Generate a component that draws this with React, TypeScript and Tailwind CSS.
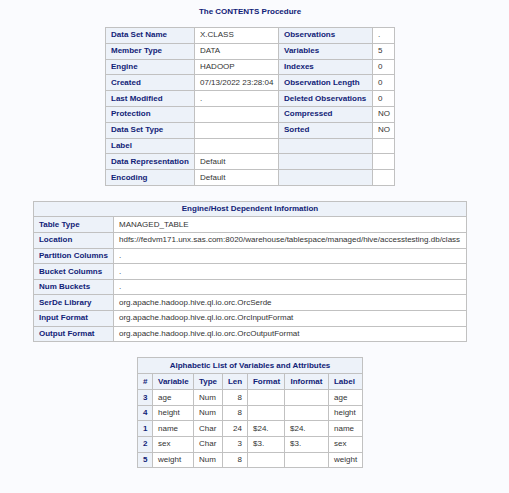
import React from 'react'

const cell = 'border border-[#c1c1c1] px-[5px] whitespace-nowrap'
const th = cell + ' bg-[#edf2f9] text-[#112277] font-bold'
const td = cell + ' bg-white text-[#333]'

const attrs: [string, string, string, string][] = [
  ['Data Set Name', 'X.CLASS', 'Observations', '.'],
  ['Member Type', 'DATA', 'Variables', '5'],
  ['Engine', 'HADOOP', 'Indexes', '0'],
  ['Created', '07/13/2022 23:28:04', 'Observation Length', '0'],
  ['Last Modified', '.', 'Deleted Observations', '0'],
  ['Protection', '', 'Compressed', 'NO'],
  ['Data Set Type', '', 'Sorted', 'NO'],
  ['Label', '', '', ''],
  ['Data Representation', 'Default', '', ''],
  ['Encoding', 'Default', '', ''],
]

const engine: [string, string][] = [
  ['Table Type', 'MANAGED_TABLE'],
  ['Location', 'hdfs://fedvm171.unx.sas.com:8020/warehouse/tablespace/managed/hive/accesstesting.db/class'],
  ['Partition Columns', '.'],
  ['Bucket Columns', '.'],
  ['Num Buckets', '.'],
  ['SerDe Library', 'org.apache.hadoop.hive.ql.io.orc.OrcSerde'],
  ['Input Format', 'org.apache.hadoop.hive.ql.io.orc.OrcInputFormat'],
  ['Output Format', 'org.apache.hadoop.hive.ql.io.orc.OrcOutputFormat'],
]

const vars = [
  { n: '3', name: 'age', type: 'Num', len: '8', fmt: '', inf: '', label: 'age' },
  { n: '4', name: 'height', type: 'Num', len: '8', fmt: '', inf: '', label: 'height' },
  { n: '1', name: 'name', type: 'Char', len: '24', fmt: '$24.', inf: '$24.', label: 'name' },
  { n: '2', name: 'sex', type: 'Char', len: '3', fmt: '$3.', inf: '$3.', label: 'sex' },
  { n: '5', name: 'weight', type: 'Num', len: '8', fmt: '', inf: '', label: 'weight' },
]

export default function App() {
  return (
    <div
      className="w-[509px] h-[493px] pr-[9px] bg-[#fafbfe] flex flex-col items-center text-[8px] leading-none"
      style={{ fontFamily: '"Liberation Sans", Arial, sans-serif' }}
    >
      <h1 className="mt-[8px] h-[19px] text-[8px] font-bold text-[#112277]">The CONTENTS Procedure</h1>

      {/* Attributes */}
      <table className="table-fixed border-collapse border border-[#c1c1c1] w-[289px]">
        <colgroup>
          <col className="w-[89px]" />
          <col className="w-[84px]" />
          <col className="w-[94px]" />
          <col className="w-[22px]" />
        </colgroup>
        <tbody>
          {attrs.map((r) => (
            <tr key={r[0]} className="h-[15.8px]">
              <th className={th + ' text-left'}>{r[0]}</th>
              <td className={td + ' text-left'}>{r[1]}</td>
              <th className={th + ' text-left'}>{r[2]}</th>
              <td className={td + ' text-left'}>{r[3]}</td>
            </tr>
          ))}
        </tbody>
      </table>

      {/* Engine/Host */}
      <table className="mt-[15px] table-fixed border-collapse border border-[#c1c1c1] w-[433px]">
        <colgroup>
          <col className="w-[80px]" />
          <col className="w-[353px]" />
        </colgroup>
        <thead>
          <tr className="h-[15.5px]">
            <th colSpan={2} className={th + ' text-center'}>Engine/Host Dependent Information</th>
          </tr>
        </thead>
        <tbody>
          {engine.map((r) => (
            <tr key={r[0]} className="h-[15.6px]">
              <th className={th + ' text-left'}>{r[0]}</th>
              <td className={td + ' text-left'}>{r[1]}</td>
            </tr>
          ))}
        </tbody>
      </table>

      {/* Variables */}
      <table className="mt-[15px] table-fixed border-collapse border border-[#c1c1c1] w-[225px]">
        <colgroup>
          <col className="w-[15px]" />
          <col className="w-[41px]" />
          <col className="w-[29px]" />
          <col className="w-[25px]" />
          <col className="w-[37px]" />
          <col className="w-[44px]" />
          <col className="w-[34px]" />
        </colgroup>
        <thead>
          <tr className="h-[16px]">
            <th colSpan={7} className={th + ' text-center'}>Alphabetic List of Variables and Attributes</th>
          </tr>
          <tr className="h-[16px]">
            <th className={th + ' text-center px-0'}>#</th>
            <th className={th + ' text-left'}>Variable</th>
            <th className={th + ' text-left'}>Type</th>
            <th className={th + ' text-right'}>Len</th>
            <th className={th + ' text-center px-0'}>Format</th>
            <th className={th + ' text-center px-0'}>Informat</th>
            <th className={th + ' text-left'}>Label</th>
          </tr>
        </thead>
        <tbody>
          {vars.map((v) => (
            <tr key={v.n} className="h-[15.6px]">
              <th className={th + ' text-center px-0'}>{v.n}</th>
              <td className={td + ' text-left'}>{v.name}</td>
              <td className={td + ' text-left'}>{v.type}</td>
              <td className={td + ' text-right'}>{v.len}</td>
              <td className={td + ' text-left'}>{v.fmt}</td>
              <td className={td + ' text-left'}>{v.inf}</td>
              <td className={td + ' text-left'}>{v.label}</td>
            </tr>
          ))}
        </tbody>
      </table>
    </div>
  )
}
